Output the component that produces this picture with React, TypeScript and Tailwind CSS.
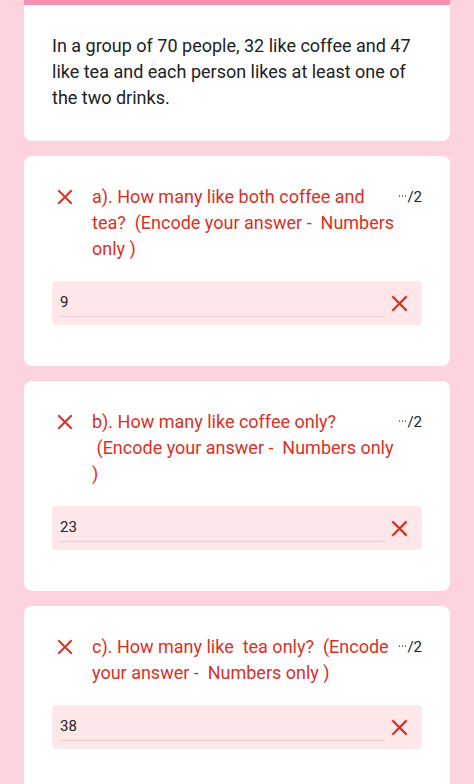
import React from "react";

const questions = [
  { label: "a). How many like both coffee and tea?  (Encode your answer -  Numbers only )", answer: "9" },
  { label: "b). How many like coffee only?  \u00a0(Encode your answer -  Numbers only )", answer: "23" },
  { label: "c). How many like  tea only?  (Encode your answer -  Numbers only )", answer: "38" },
];

function Cross({ size = 16 }: { size?: number }) {
  return (
    <svg width={size} height={size} viewBox="0 0 24 24" fill="none" stroke="#d93025" strokeWidth="3" strokeLinecap="square">
      <path d="M3 3L21 21M21 3L3 21" />
    </svg>
  );
}

export default function App() {
  return (
    <div className="min-h-[784px] bg-[#fdd3de] px-6 pb-6 font-['Roboto',sans-serif]">
      <div className="bg-white rounded-b-lg border-t-[5px] border-[#f78fae] px-7 pt-[28px] pb-[30px]">
        <p className="text-[18px] leading-[26px] text-[#202124]">
          In a group of 70 people, 32 like coffee and 47 like tea and each person likes at least one of the two drinks.
        </p>
      </div>

      {questions.map((q, i) => (
        <div key={i} className="bg-white rounded-lg mt-[15px] px-7 pt-[28px] pb-[41px]">
          <div className="flex items-start">
            <div className="w-[40px] shrink-0 pt-[5px] pl-[5px]">
              <Cross size={16} />
            </div>
            <p className="flex-1 whitespace-pre-wrap text-[18px] leading-[26px] text-[#d93025]">{q.label}</p>
            <span className="w-[25px] shrink-0 flex items-center justify-end h-[26px] text-[15px] text-[#202124] whitespace-nowrap">
              <span className="flex gap-[1.5px] mr-[1px] mb-[2px]">
                <span className="w-[1.5px] h-[1.5px] rounded-full bg-[#5f6368]" />
                <span className="w-[1.5px] h-[1.5px] rounded-full bg-[#5f6368]" />
                <span className="w-[1.5px] h-[1.5px] rounded-full bg-[#5f6368]" />
              </span>
              /2
            </span>
          </div>
          <div className="mt-[19px] h-[44px] rounded bg-[#fde7e9] flex items-center pl-2 pr-[14px]">
            <div className="flex-1 h-[25px] mt-[3px] border-b border-[#e9cacd] text-[15px] leading-[20px] text-[#202124] mr-[6px]">
              {q.answer}
            </div>
            <Cross size={17} />
          </div>
        </div>
      ))}
    </div>
  );
}
